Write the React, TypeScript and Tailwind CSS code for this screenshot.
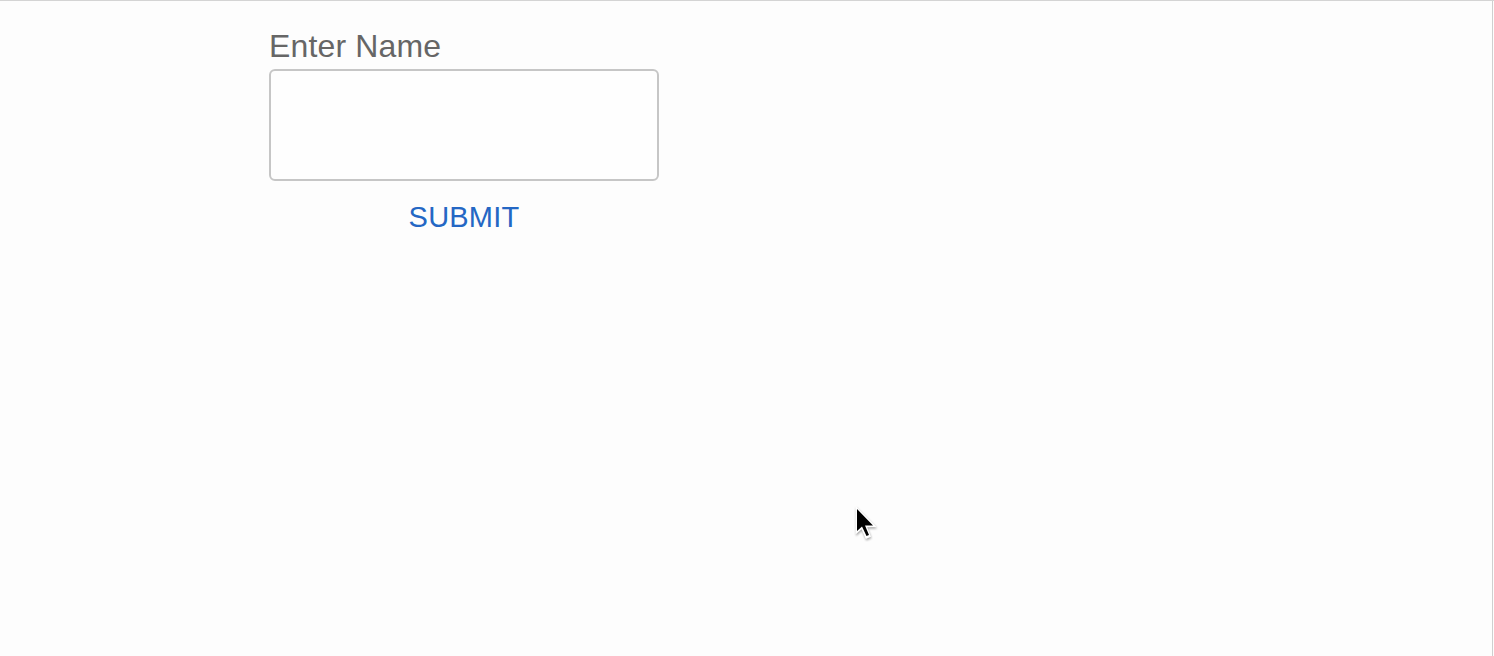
import React from "react";

export default function App() {
  return (
    <div className="relative w-[1494px] h-[656px] overflow-hidden bg-[#fdfdfd] border-t border-[#d4d4d4]" style={{ fontFamily: '"Liberation Sans", Arial, sans-serif' }}>
      <div className="absolute right-[1px] top-0 bottom-0 w-px bg-[#cfcfcf]" />
      <div className="pl-[269px] pt-[26px] flex flex-col w-[660px]">
        <label className="text-[32px] leading-[38px] text-[#666666] tracking-[0.15px]">Enter Name</label>
        <div className="mt-[4px] w-[390px] h-[112px] border-2 border-[#c6c6c6] rounded-[6px] bg-[#fefefe]" />
        <button className="w-[390px] mt-[20px] text-[29px] leading-[32px] text-[#2467c4] tracking-[0.2px]">SUBMIT</button>
      </div>
      <svg className="absolute left-[853px] top-[504px]" width="30" height="40" viewBox="0 0 30 40">
        <defs>
          <filter id="sh" x="-50%" y="-50%" width="200%" height="200%">
            <feGaussianBlur stdDeviation="1.2" />
          </filter>
        </defs>
        <path d="M2.5 0.8 L2.5 29.5 L8.6 24.2 L12.8 34 L18 31.8 L14.2 22.2 L23.6 22 Z" fill="#000" opacity="0.35" filter="url(#sh)" transform="translate(0.5,1.5)" />
        <path d="M2.5 0.8 L2.5 29.5 L8.6 24.2 L12.8 34 L18 31.8 L14.2 22.2 L23.6 22 Z" fill="#fff" />
        <path d="M4 4 L4 26 L9 21.5 L13.5 31 L16 30 L12 20.5 L20 20.5 Z" fill="#000" />
      </svg>
    </div>
  );
}
